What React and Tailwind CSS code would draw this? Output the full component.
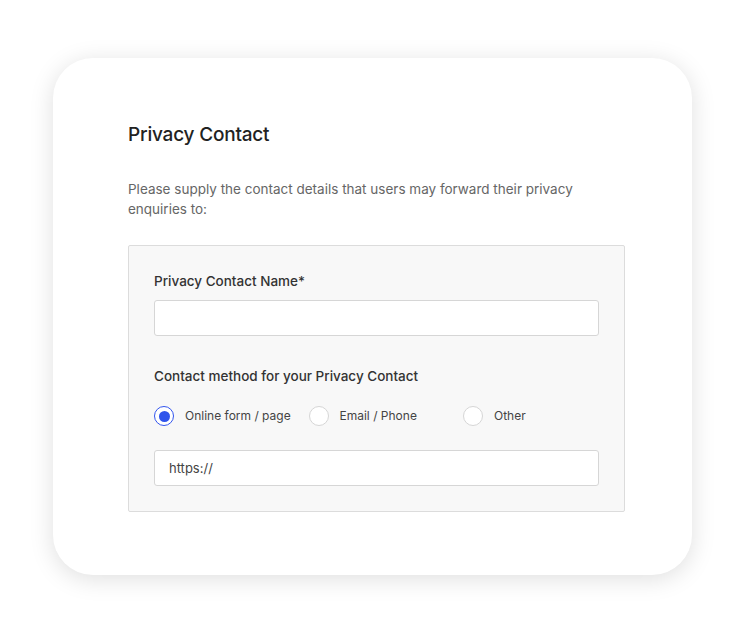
import React, { useState } from 'react';

const methods = [
  { id: 'online', label: 'Online form / page' },
  { id: 'email', label: 'Email / Phone' },
  { id: 'other', label: 'Other' },
];

const Radio = ({ checked, label, onClick }) => (
  <button onClick={onClick} className="flex items-center shrink-0 w-[154.5px] text-left">
    <span
      className={`flex items-center justify-center w-5 h-5 rounded-full bg-white border ${
        checked ? 'border-[#3355ee] border-[1.5px]' : 'border-[#d6d6d6]'
      }`}
    >
      {checked && <span className="w-[11px] h-[11px] rounded-full bg-[#2f54eb]" />}
    </span>
    <span className="ml-[11px] text-[12px] text-[#444]">{label}</span>
  </button>
);

const App = () => {
  const [method, setMethod] = useState('online');

  return (
    <div
      className="min-h-screen bg-white pt-[58px] pl-[53px]"
      style={{ fontFamily: 'Inter, "Noto Sans", sans-serif' }}
    >
      <div className="w-[639px] h-[517px] bg-white rounded-[40px] shadow-[0_4px_24px_rgba(0,0,0,0.13)] pt-[65px] pl-[75px] pr-[67px]">
        <h1 className="text-[19px] leading-[24px] font-medium text-[#222] tracking-[-0.2px]">
          Privacy Contact
        </h1>

        <p className="mt-[32px] text-[13.5px] leading-[20px] text-[#666] w-[460px]">
          Please supply the contact details that users may forward their privacy enquiries to:
        </p>

        {/* Form box */}
        <div className="mt-[26px] bg-[#f8f8f8] border border-[#dcdcdc] rounded-[2px] px-[25px] pt-[25px] pb-[25px]">
          <label className="block text-[13.5px] leading-[20px] font-medium text-[#333]">
            Privacy Contact Name*
          </label>
          <input
            type="text"
            className="mt-[9px] w-full h-[36px] bg-white border border-[#d6d6d6] rounded-[3px] px-[14px] text-[13px] outline-none"
          />

          <div className="mt-[30px] text-[13.5px] leading-[20px] font-medium text-[#333]">
            Contact method for your Privacy Contact
          </div>

          <div className="mt-[20px] flex items-center">
            {methods.map((m) => (
              <Radio
                key={m.id}
                label={m.label}
                checked={method === m.id}
                onClick={() => setMethod(m.id)}
              />
            ))}
          </div>

          <input
            type="text"
            defaultValue="https://"
            className="mt-[24px] w-full h-[36px] bg-white border border-[#d6d6d6] rounded-[3px] px-[14px] text-[13px] text-[#444] outline-none"
          />
        </div>
      </div>
    </div>
  );
};

export default App;
